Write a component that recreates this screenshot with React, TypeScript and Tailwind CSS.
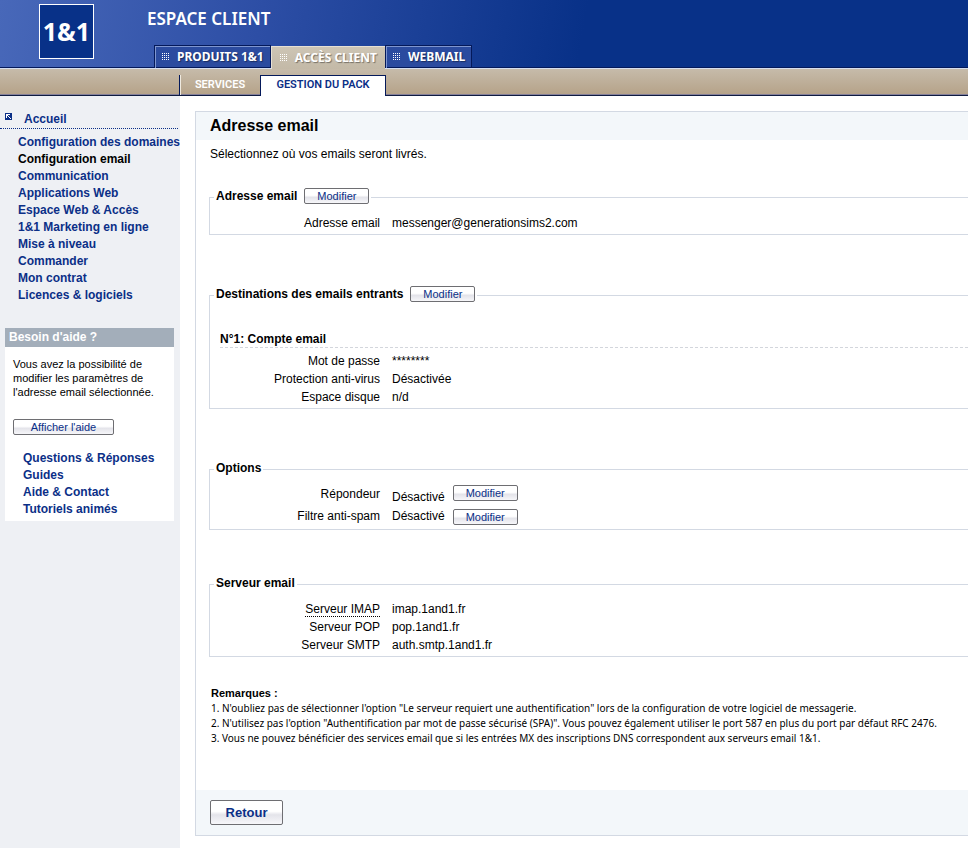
import { ReactNode } from "react";

const mainTabs = [
  { label: "PRODUITS 1&1", active: false },
  { label: "ACCÈS CLIENT", active: true },
  { label: "WEBMAIL", active: false },
];

const menuItems = [
  "Configuration des domaines",
  "Configuration email",
  "Communication",
  "Applications Web",
  "Espace Web & Accès",
  "1&1 Marketing en ligne",
  "Mise à niveau",
  "Commander",
  "Mon contrat",
  "Licences & logiciels",
];

const helpLinks = ["Questions & Réponses", "Guides", "Aide & Contact", "Tutoriels animés"];

const remarks = [
  `N'oubliez pas de sélectionner l'option "Le serveur requiert une authentification" lors de la configuration de votre logiciel de messagerie.`,
  `N'utilisez pas l'option "Authentification par mot de passe sécurisé (SPA)". Vous pouvez également utiliser le port 587 en plus du port par défaut RFC 2476.`,
  `Vous ne pouvez bénéficier des services email que si les entrées MX des inscriptions DNS correspondent aux serveurs email 1&1.`,
];

const buttonStyle =
  "shrink-0 rounded-xs border border-[#6e6e72] bg-linear-to-b from-white from-45% via-[#e4e4ea] via-60% to-[#f7f7fa] text-[#0b2f87]";

function Grip() {
  return (
    <svg width="8" height="8" viewBox="0 0 8 8" className="shrink-0" shapeRendering="crispEdges">
      {[0, 2, 4, 6].map((y) =>
        [0, 2, 4, 6].map((x) => (
          <rect key={`${x}-${y}`} x={x} y={y} width="1" height="1" fill="#fff" />
        )),
      )}
    </svg>
  );
}

function ModifyButton({ className = "" }: { className?: string }) {
  return (
    <button
      type="button"
      className={`${buttonStyle} h-4 w-[65px] text-[11px] leading-[14px] font-normal ${className}`}
    >
      Modifier
    </button>
  );
}

interface GroupProps {
  title: string;
  editable?: boolean;
  className?: string;
  children: ReactNode;
}

function Group({ title, editable, className = "", children }: GroupProps) {
  return (
    <fieldset className={`border border-r-0 border-[#d3d9e3] pb-0.5 pl-1 ${className}`}>
      <legend className="px-0.5 font-bold">
        <span className="flex h-[18px] items-start gap-[7px]">
          <span className="leading-4">{title}</span>
          {editable && <ModifyButton />}
        </span>
      </legend>
      {children}
    </fieldset>
  );
}

function Row({ label, children }: { label: ReactNode; children: ReactNode }) {
  return (
    <div className="flex leading-[18px]">
      <dt className="w-[166px] shrink-0 text-right">{label}</dt>
      <dd className="ml-3 flex gap-2">{children}</dd>
    </div>
  );
}

function Header() {
  return (
    <header className="flex h-[69px] border-b border-[#d5deef] bg-[linear-gradient(100deg,#4868b9_0px,#2d4ea5_260px,#083188_580px)] shadow-[inset_0_-1px_0_#04195a]">
      <a
        href="#"
        className="mt-1 ml-[39px] flex size-[55px] shrink-0 items-center justify-center border border-white bg-[#083188] font-['Open_Sans',sans-serif] text-[25px] leading-none font-bold text-white"
      >
        1&amp;1
      </a>
      <div className="ml-[53px] flex flex-col justify-between">
        <h1 className="pt-[9px] font-['Noto_Sans',sans-serif] text-[17px] leading-5 font-semibold text-white">
          ESPACE CLIENT
        </h1>
        <ul className="flex items-end pl-[7px] font-['Noto_Sans',sans-serif] text-[12px] font-bold whitespace-nowrap text-white [text-shadow:1px_1px_1px_#0006]">
          {mainTabs.map((tab) => (
            <li key={tab.label}>
              <a
                href="#"
                className={
                  tab.active
                    ? "-mb-px flex h-[23px] items-center gap-[7px] border-t border-l border-[#e6e0d4] bg-linear-to-b from-[#cdc5b5] to-[#c3b9a7] px-2 pb-px"
                    : "flex h-[23px] items-center gap-[7px] border-x border-t border-[#04195a] bg-[#2b4b9f] pr-1.5 pl-[7px] shadow-[inset_1px_1px_0_#7f96cf,inset_0_-1px_0_#04195a]"
                }
              >
                <Grip />
                {tab.label}
              </a>
            </li>
          ))}
        </ul>
      </div>
    </header>
  );
}

function SubNav() {
  return (
    <nav className="flex h-[27px] items-end border-b border-[#0f1b40] bg-linear-to-b from-[#c6bbaa] to-[#b5a288] pl-[179px] text-center font-['Roboto',sans-serif] text-[11px] leading-[18px] font-semibold shadow-[inset_0_-1px_0_#84809a]">
      <a
        href="#"
        className="h-5 w-[81px] border-l border-[#04195a] pt-px text-white shadow-[inset_1px_0_0_#efeae0]"
      >
        SERVICES
      </a>
      <a
        href="#"
        className="-mb-px h-[21px] w-[126px] border-x border-t border-[#04195a] bg-white text-[#0b2f87]"
      >
        GESTION DU PACK
      </a>
    </nav>
  );
}

function Sidebar() {
  return (
    <aside className="w-[180px] shrink-0 bg-[#eef0f4] pt-3.5">
      <a
        href="#"
        className="mr-0.5 flex h-[19px] gap-3 border-b border-dotted border-[#0b2f87] pl-[5px] leading-[18px] font-bold text-[#0b2f87]"
      >
        <svg width="7" height="7" viewBox="0 0 7 7" className="mt-[3px]" shapeRendering="crispEdges">
          <rect width="7" height="7" fill="#0b2f87" />
          <path d="M1 1h4v1H3v1h1v1h1v1h1v1H5V5H4V4H3V3H2v2H1z" fill="#fff" />
        </svg>
        Accueil
      </a>
      <ul className="pt-[5px] pl-[18px] leading-[17px] font-bold whitespace-nowrap">
        {menuItems.map((item) => (
          <li key={item}>
            <a
              href="#"
              className={item === "Configuration email" ? "text-black" : "text-[#0b2f87]"}
            >
              {item}
            </a>
          </li>
        ))}
      </ul>
      <section className="mt-6 mr-1.5 ml-[5px] bg-white pb-[3px]">
        <h2 className="bg-[#a3aeba] pl-1 leading-[19px] font-bold text-white">Besoin d'aide ?</h2>
        <p className="px-2 pt-2.5 text-[11px] leading-[14px]">
          Vous avez la possibilité de modifier les paramètres de l'adresse email sélectionnée.
        </p>
        <button
          type="button"
          className={`${buttonStyle} mt-5 ml-2 block h-4 w-[101px] text-[11px] leading-[14px]`}
        >
          Afficher l'aide
        </button>
        <ul className="pt-[15px] pl-[18px] leading-[17px] font-bold text-[#0b2f87]">
          {helpLinks.map((link) => (
            <li key={link}>
              <a href="#">{link}</a>
            </li>
          ))}
        </ul>
      </section>
    </aside>
  );
}

function App() {
  return (
    <div className="flex min-h-screen flex-col bg-white font-['Liberation_Sans',Arial,sans-serif] text-[12px] text-black">
      <Header />
      <SubNav />
      <div className="flex grow">
        <Sidebar />
        <main className="min-w-0 grow pt-[15px] pb-3 pl-[15px]">
          <div className="border border-r-0 border-[#d3d9e3]">
            <h2 className="bg-[#f3f7fa] pl-3.5 text-[16px] leading-7 font-bold">Adresse email</h2>
            <div className="pl-[13px]">
              <p className="pt-1.5 pl-px leading-4">Sélectionnez où vos emails seront livrés.</p>

              <Group title="Adresse email" editable className="mt-[26px]">
                <dl className="pt-2">
                  <Row label="Adresse email">messenger@generationsims2.com</Row>
                </dl>
              </Group>

              <Group title="Destinations des emails entrants" editable className="mt-[51px]">
                <h3 className="mt-7 mb-1 ml-1.5 border-b border-dashed border-[#d3d6dc] leading-[15px] font-bold">
                  N°1: Compte email
                </h3>
                <dl>
                  <Row label="Mot de passe">********</Row>
                  <Row label="Protection anti-virus">Désactivée</Row>
                  <Row label="Espace disque">n/d</Row>
                </dl>
              </Group>

              <Group title="Options" className="mt-[51px]">
                <dl className="flex flex-col gap-px pt-[7px] pb-0.5">
                  <Row label="Répondeur">
                    <span className="pt-[3px]">Désactivé</span>
                    <ModifyButton />
                  </Row>
                  <Row label="Filtre anti-spam">
                    <span>Désactivé</span>
                    <ModifyButton className="self-end" />
                  </Row>
                </dl>
              </Group>

              <Group title="Serveur email" className="mt-[45px]">
                <dl className="pt-[7px]">
                  <Row
                    label={
                      <abbr
                        title="Internet Message Access Protocol"
                        className="border-b border-dotted border-black no-underline"
                      >
                        Serveur IMAP
                      </abbr>
                    }
                  >
                    imap.1and1.fr
                  </Row>
                  <Row label="Serveur POP">pop.1and1.fr</Row>
                  <Row label="Serveur SMTP">auth.smtp.1and1.fr</Row>
                </dl>
              </Group>

              <section className="mt-[29px] pb-11 pl-0.5 text-[11px] leading-[15px]">
                <h3 className="font-bold">Remarques :</h3>
                <ol className="list-inside list-decimal font-['Noto_Sans',sans-serif] text-[10px]">
                  {remarks.map((remark) => (
                    <li key={remark}>{remark}</li>
                  ))}
                </ol>
              </section>
            </div>
            <div className="bg-[#f3f7fa] px-3.5 py-2.5">
              <button
                type="button"
                className={`${buttonStyle} block h-[25px] w-[73px] text-[13px] font-bold`}
              >
                Retour
              </button>
            </div>
          </div>
        </main>
      </div>
    </div>
  );
}

export default App;
